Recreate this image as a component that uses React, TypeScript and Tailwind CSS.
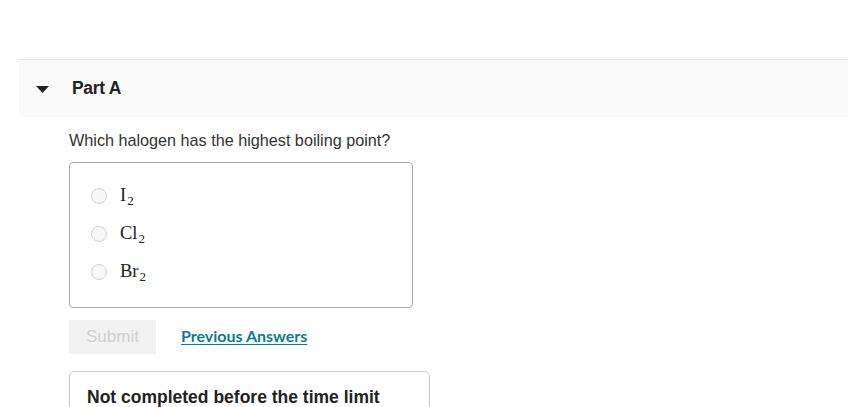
export default function App() {
  const options = [
    { base: 'I', sub: '2' },
    { base: 'Cl', sub: '2' },
    { base: 'Br', sub: '2' },
  ];

  return (
    <div className="w-[848px] h-[407px] overflow-hidden bg-white font-['Liberation_Sans',Arial,sans-serif] text-[#333]">
      <div className="pt-[59px] pl-[19px]">
        {/* Part header */}
        <div className="h-[58px] bg-[#f9f9f9] border-t border-[#e3e3e3] flex items-center">
          <svg width="13" height="7" viewBox="0 0 13 7" className="ml-[17px] mt-[1px]">
            <path d="M0 0 L13 0 L6.5 7 Z" fill="#222" />
          </svg>
          <span className="ml-[23px] text-[17.5px] font-bold text-[#222] tracking-[-0.3px]">Part A</span>
        </div>

        <div className="pl-[50px]">
          <p className="mt-[14px] text-[16.2px] leading-[18px] text-[#333]">
            Which halogen has the highest boiling point?
          </p>

          {/* Options */}
          <div className="mt-[13px] w-[344px] h-[146px] border border-[#a9a9a9] rounded-[4px] pt-[23px] pl-[21px] flex flex-col gap-[19px]">
            {options.map((o, i) => (
              <label key={i} className="flex items-center h-[19px]">
                <span className="w-[16px] h-[16px] rounded-full border border-[#d3d3d3] bg-[#f7f7f7]" />
                <span className="ml-[13px] font-['Liberation_Serif','Times_New_Roman',serif] text-[18.5px] text-[#222] leading-none">
                  {o.base}
                  <sub className="text-[13px] ml-[1px]">{o.sub}</sub>
                </span>
              </label>
            ))}
          </div>

          {/* Actions */}
          <div className="mt-[12px] flex items-center">
            <button className="w-[87px] h-[34px] bg-[#f2f2f2] text-[#cfcfcf] text-[17px]">Submit</button>
            <a className="ml-[25px] -mt-[2px] text-[16px] font-bold text-[#0c7b91] underline underline-offset-[2px] font-['Lato','Liberation_Sans',sans-serif]">
              Previous Answers
            </a>
          </div>

          {/* Feedback */}
          <div className="mt-[17px] w-[361px] h-[60px] border border-[#c8c8c8] rounded-[5px] pt-[14px] pl-[17px]">
            <span className="text-[17.5px] leading-[20px] font-bold text-[#222]">Not completed before the time limit</span>
          </div>
        </div>
      </div>
    </div>
  );
}
